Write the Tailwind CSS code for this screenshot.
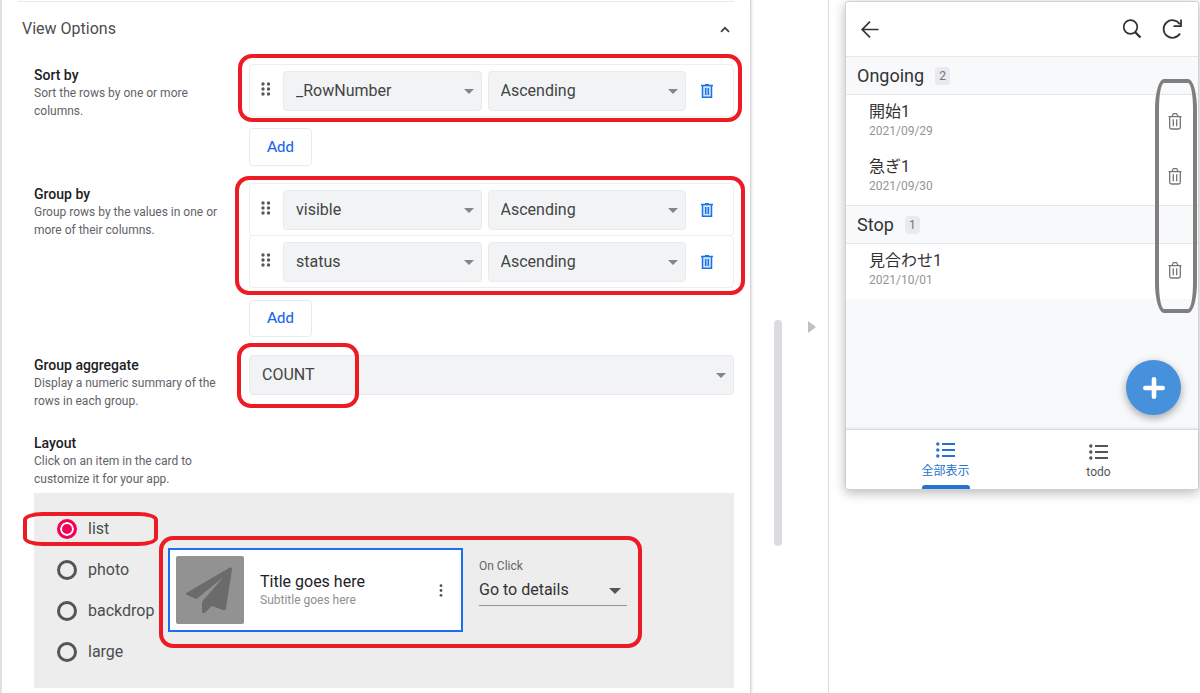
<!DOCTYPE html>
<html lang="en">
<head>
  <meta charset="UTF-8" />
  <meta name="viewport" content="width=device-width, initial-scale=1" />
  <title>View Options</title>
  <script src="https://cdn.jsdelivr.net/npm/@tailwindcss/browser@4"></script>
</head>
<body class="bg-white font-[Roboto,'Noto_Sans_CJK_JP',sans-serif] text-[#3c4043]">

<!-- Shared icons -->
<svg class="hidden">
  <symbol id="drag" viewBox="0 0 10 14">
    <g fill="#55585c"><circle cx="2" cy="2" r="1.7"/><circle cx="7.5" cy="2" r="1.7"/><circle cx="2" cy="7" r="1.7"/><circle cx="7.5" cy="7" r="1.7"/><circle cx="2" cy="12" r="1.7"/><circle cx="7.5" cy="12" r="1.7"/></g>
  </symbol>
  <symbol id="trash" viewBox="0 0 12 14">
    <path d="M1.500 1.500h9v11.700h-9z" fill="#d2e3fc"/>
    <path d="M0 1.5h12M4 .7h4M1.5 1.5v11.7h9V1.5M4.7 4v7M7.3 4v7" fill="none" stroke="currentColor" stroke-width="1.5"/>
  </symbol>
  <symbol id="trash-thin" viewBox="0 0 14 17">
    <path d="M.5 3.7h13M4 3.5l1-2.3q.2-.5.7-.5h2.6q.5 0 .7.5l1 2.3M1.7 3.7v10.6q0 1.7 1.700 1.700h7.200q1.700 0 1.700-1.700V3.700M5.300 6.300v7M8.700 6.300v7" fill="none" stroke="currentColor" stroke-width="1.300"/>
  </symbol>
  <symbol id="caret" viewBox="0 0 10 5">
    <path d="M0 0h10L5 5z" fill="currentColor"/>
  </symbol>
  <symbol id="list" viewBox="0 0 19 16">
    <path d="M6 2h13M6 8h13M6 14h13" stroke="currentColor" stroke-width="1.8"/>
    <g fill="currentColor"><circle cx="1.8" cy="2" r="1.7"/><circle cx="1.8" cy="8" r="1.7"/><circle cx="1.8" cy="14" r="1.7"/></g>
  </symbol>
</svg>

<div class="flex h-screen overflow-hidden">

  <!-- Editor panel -->
  <main class="min-w-0 flex-1 border-l-2 border-r border-l-[#e0e0e0] border-r-[#d5d5d5] pl-4 pr-4 shadow-[1px_0_2px_rgba(0,0,0,0.12)]">
    <header class="mt-px flex h-[63px] items-start justify-between border-t border-[#e8e8e8] pl-1 pt-[15px]">
      <h1 class="text-base leading-6 text-[#4a4d51]">View Options</h1>
      <button type="button" aria-label="Collapse" class="mr-1 flex h-6 items-center text-[#3c4043]">
        <svg class="h-[7px] w-[10px]" viewBox="0 0 10 7"><path d="M1 5.8l4-4 4 4" fill="none" stroke="currentColor" stroke-width="1.7"/></svg>
      </button>
    </header>

    <div class="pl-4">
      <!-- Sort by -->
      <section class="flex">
        <div class="w-[215px] shrink-0 pr-4 pt-[2px]">
          <h2 class="text-sm leading-[18px] font-medium text-[#202124]">Sort by</h2>
          <p class="text-xs leading-[18px] text-[#5f6368]">Sort the rows by one or more columns.</p>
        </div>
        <div class="min-w-0 flex-1">
          <div class="relative">
            <div class="flex h-[53px] items-center rounded border border-[#eceef0] pl-[11px]">
              <svg class="mb-1 mr-3 h-[14px] w-[10px]"><use href="#drag"/></svg>
              <div class="flex min-w-0 flex-1 gap-[6px]">
                <div class="relative flex-1">
                  <select aria-label="Sort column" class="h-10 w-full appearance-none rounded border border-[#e8eaed] bg-[#f1f3f4] pl-3 text-base text-[#444]"><option>_RowNumber</option></select>
                  <svg class="pointer-events-none absolute right-2 top-[18px] h-[5px] w-[10px] text-[#80868b]"><use href="#caret"/></svg>
                </div>
                <div class="relative flex-1">
                  <select aria-label="Sort order" class="h-10 w-full appearance-none rounded border border-[#e8eaed] bg-[#f1f3f4] pl-3 text-base text-[#444]"><option>Ascending</option></select>
                  <svg class="pointer-events-none absolute right-2 top-[18px] h-[5px] w-[10px] text-[#80868b]"><use href="#caret"/></svg>
                </div>
              </div>
              <button type="button" aria-label="Delete" class="ml-[11px] mr-4 flex w-5 justify-center text-[#1a73e8]"><svg class="h-[14px] w-3"><use href="#trash"/></svg></button>
            </div>
            <div class="pointer-events-none absolute -bottom-[5px] -left-[11px] -right-2 -top-[10px] rounded-[14px] border-4 border-[#ed1c24]"></div>
          </div>
          <button type="button" class="mt-[11px] h-[38px] w-[63px] rounded border border-[#e8eaed] pb-[2px] font-[Lato,sans-serif] text-[15px] font-medium text-[#1a67e8]">Add</button>
        </div>
      </section>

      <!-- Group by -->
      <section class="mt-[17px] flex">
        <div class="w-[215px] shrink-0 pr-4 pt-[2px]">
          <h2 class="text-sm leading-[18px] font-medium text-[#202124]">Group by</h2>
          <p class="text-xs leading-[18px] text-[#5f6368]">Group rows by the values in one or more of their columns.</p>
        </div>
        <div class="min-w-0 flex-1">
          <div class="relative">
            <div class="flex h-[53px] items-center rounded border border-[#eceef0] pl-[11px]">
              <svg class="mb-1 mr-3 h-[14px] w-[10px]"><use href="#drag"/></svg>
              <div class="flex min-w-0 flex-1 gap-[6px]">
                <div class="relative flex-1">
                  <select aria-label="First group column" class="h-10 w-full appearance-none rounded border border-[#e8eaed] bg-[#f1f3f4] pl-3 text-base text-[#444]"><option>visible</option></select>
                  <svg class="pointer-events-none absolute right-2 top-[18px] h-[5px] w-[10px] text-[#80868b]"><use href="#caret"/></svg>
                </div>
                <div class="relative flex-1">
                  <select aria-label="First group order" class="h-10 w-full appearance-none rounded border border-[#e8eaed] bg-[#f1f3f4] pl-3 text-base text-[#444]"><option>Ascending</option></select>
                  <svg class="pointer-events-none absolute right-2 top-[18px] h-[5px] w-[10px] text-[#80868b]"><use href="#caret"/></svg>
                </div>
              </div>
              <button type="button" aria-label="Delete" class="ml-[11px] mr-4 flex w-5 justify-center text-[#1a73e8]"><svg class="h-[14px] w-3"><use href="#trash"/></svg></button>
            </div>
            <div class="-mt-px flex h-[53px] items-center rounded border border-[#eceef0] pl-[11px]">
              <svg class="mb-1 mr-3 h-[14px] w-[10px]"><use href="#drag"/></svg>
              <div class="flex min-w-0 flex-1 gap-[6px]">
                <div class="relative flex-1">
                  <select aria-label="Second group column" class="h-10 w-full appearance-none rounded border border-[#e8eaed] bg-[#f1f3f4] pl-3 text-base text-[#444]"><option>status</option></select>
                  <svg class="pointer-events-none absolute right-2 top-[18px] h-[5px] w-[10px] text-[#80868b]"><use href="#caret"/></svg>
                </div>
                <div class="relative flex-1">
                  <select aria-label="Second group order" class="h-10 w-full appearance-none rounded border border-[#e8eaed] bg-[#f1f3f4] pl-3 text-base text-[#444]"><option>Ascending</option></select>
                  <svg class="pointer-events-none absolute right-2 top-[18px] h-[5px] w-[10px] text-[#80868b]"><use href="#caret"/></svg>
                </div>
              </div>
              <button type="button" aria-label="Delete" class="ml-[11px] mr-4 flex w-5 justify-center text-[#1a73e8]"><svg class="h-[14px] w-3"><use href="#trash"/></svg></button>
            </div>
            <div class="pointer-events-none absolute -bottom-[7px] -left-[14px] -right-[11px] -top-[7px] rounded-[14px] border-4 border-[#ed1c24]"></div>
          </div>
          <button type="button" class="mt-3 h-[37px] w-[63px] rounded border border-[#e8eaed] pb-[2px] font-[Lato,sans-serif] text-[15px] font-medium text-[#1a67e8]">Add</button>
        </div>
      </section>

      <!-- Group aggregate -->
      <section class="mt-[18px] flex">
        <div class="w-[215px] shrink-0 pr-4 pt-px">
          <h2 class="text-sm leading-[18px] font-medium text-[#202124]">Group aggregate</h2>
          <p class="text-xs leading-[18px] text-[#5f6368]">Display a numeric summary of the rows in each group.</p>
        </div>
        <div class="relative min-w-0 flex-1">
          <select aria-label="Group aggregate" class="h-10 w-full appearance-none rounded border border-[#e8eaed] bg-[#f1f3f4] pl-3 text-base text-[#444]"><option>COUNT</option></select>
          <svg class="pointer-events-none absolute right-2 top-[18px] h-[5px] w-[10px] text-[#80868b]"><use href="#caret"/></svg>
          <div class="pointer-events-none absolute -left-3 -top-3 h-[65px] w-[122px] rounded-[14px] border-4 border-[#ed1c24]"></div>
        </div>
      </section>

      <!-- Layout -->
      <section class="mt-6">
        <h2 class="text-sm leading-[18px] font-medium text-[#202124]">Layout</h2>
        <p class="w-[200px] text-xs leading-[18px] text-[#5f6368]">Click on an item in the card to customize it for your app.</p>

        <div class="relative mt-[5px] flex h-[195px] items-start bg-[#ededed]">
          <div class="w-[134px] shrink-0 pl-[23px] pt-[15px] text-base text-[#4a4d51]">
            <label class="flex h-[41px] items-center gap-[11px]"><input type="radio" name="layout" checked class="size-5 shrink-0 appearance-none rounded-full border-[3px] border-[#f50057] bg-[#f50057] shadow-[inset_0_0_0_2px_#fff]">list</label>
            <label class="flex h-[41px] items-center gap-[11px]"><input type="radio" name="layout" class="size-5 shrink-0 appearance-none rounded-full border-[3px] border-[#555]">photo</label>
            <label class="flex h-[41px] items-center gap-[11px]"><input type="radio" name="layout" class="size-5 shrink-0 appearance-none rounded-full border-[3px] border-[#555]">backdrop</label>
            <label class="flex h-[41px] items-center gap-[11px]"><input type="radio" name="layout" class="size-5 shrink-0 appearance-none rounded-full border-[3px] border-[#555]">large</label>
          </div>

          <div class="relative mt-[55px] flex pr-[15px]">
            <div class="flex h-[84px] w-[295px] items-center border-2 border-[#1a6ff0] bg-white pl-[6px] pr-4">
              <div class="size-[68px] rounded-[2px] bg-[#929292]">
                <svg class="size-[68px]" viewBox="0 0 68 68"><path d="M53.5 11.7Q56 10.5 56 13.3L50 52.5q-.5 2.3-3 1.6L36 50l-7.5 7q-2.5 1-2.5-1.5V48q0-2 1-3.5L47.5 21 20.5 43 11 39q-2-1-.3-2.3z" fill="#6b6b6b"/></svg>
              </div>
              <div class="ml-4 flex-1">
                <div class="text-base leading-5 text-[#202124]">Title goes here</div>
                <div class="text-xs leading-4 text-[#8f8f8f]">Subtitle goes here</div>
              </div>
              <button type="button" aria-label="More" class="flex w-2 justify-center text-[#555]">
                <svg class="h-[13px] w-1" viewBox="0 0 4 13" fill="currentColor"><circle cx="2" cy="1.7" r="1.4"/><circle cx="2" cy="6.5" r="1.4"/><circle cx="2" cy="11.3" r="1.4"/></svg>
              </button>
            </div>
            <div class="relative ml-4 w-[148px] pt-[10px]">
              <label for="on-click" class="block text-xs leading-4 text-[#666]">On Click</label>
              <select id="on-click" class="h-8 w-full appearance-none border-b border-[#949494] text-base text-[#333]"><option>Go to details</option></select>
              <svg class="pointer-events-none absolute right-[6px] top-10 h-[6px] w-3 text-[#555]" viewBox="0 0 12 6"><path d="M0 0h12L6 6z" fill="currentColor"/></svg>
            </div>
            <div class="pointer-events-none absolute -bottom-4 -left-[9px] -top-3 right-0 rounded-[14px] border-4 border-[#ed1c24]"></div>
          </div>

          <div class="pointer-events-none absolute -left-[11px] top-[19px] h-[34px] w-[135px] rounded-[20px/8px] border-4 border-[#ed1c24]"></div>
        </div>
      </section>
    </div>
  </main>

  <!-- Scrollbar and preview toggle -->
  <div class="flex w-[77px] shrink-0 items-start pl-[23px] pt-[320px]">
    <div class="h-[226px] w-2 rounded-full bg-[#dadce0]"></div>
    <button type="button" aria-label="Hide preview" class="ml-[26px] mt-px text-[#bdc1c6]"><svg class="h-3 w-2" viewBox="0 0 8 12"><path d="M0 0l8 6-8 6z" fill="currentColor"/></svg></button>
  </div>

  <!-- App preview -->
  <aside class="w-[372px] shrink-0 border-l border-[#dadce0] pl-4 pr-px pt-px">
    <div class="relative flex h-[489px] flex-col rounded-[3px] border border-[#d0d2d4] bg-[#f8f9fb] shadow-[0_3px_12px_rgba(0,0,0,0.28)]">
      <header class="flex h-[55px] shrink-0 items-center rounded-t-[3px] border-b border-[#e4e6e8] bg-white pl-[15px] pr-4 text-[#333]">
        <button type="button" aria-label="Back"><svg class="h-[17px] w-[18px]" viewBox="0 0 18 17"><path d="M17.5 8.5H1.5M9 .7L1.2 8.5 9 16.3" fill="none" stroke="currentColor" stroke-width="1.7"/></svg></button>
        <button type="button" aria-label="Search" class="ml-auto"><svg class="size-5" viewBox="0 0 20 20"><circle cx="8.5" cy="8" r="6.8" fill="none" stroke="currentColor" stroke-width="1.7"/><path d="M13 13l5.500 5.500" stroke="currentColor" stroke-width="2.4"/></svg></button>
        <button type="button" aria-label="Refresh" class="ml-5"><svg class="size-5" viewBox="0 0 20 20"><path d="M18 14.5A8.800 8.800 0 1 1 17.800 5.200M19 .5v6.700h-7.500" fill="none" stroke="currentColor" stroke-width="1.8"/></svg></button>
      </header>

      <div class="flex h-[38px] shrink-0 items-center gap-[11px] border-b border-[#e4e6e8] pl-[11px] text-lg text-[#333]">Ongoing <span class="flex h-[18px] w-[15px] items-center justify-center rounded bg-[#e8eaed] text-xs text-[#757575]">2</span></div>
      <div class="flex h-[55px] shrink-0 items-center bg-white pb-[3px] pl-[23px] pr-4">
        <div class="flex-1"><div class="text-base leading-5 text-[#333]">開始1</div><div class="text-xs leading-[18px] text-[#959595]">2021/09/29</div></div>
        <button type="button" aria-label="Delete" class="text-[#757575]"><svg class="h-[17px] w-[14px]"><use href="#trash-thin"/></svg></button>
      </div>
      <div class="flex h-[55px] shrink-0 items-center bg-white pb-[3px] pl-[23px] pr-4">
        <div class="flex-1"><div class="text-base leading-5 text-[#333]">急ぎ1</div><div class="text-xs leading-[18px] text-[#959595]">2021/09/30</div></div>
        <button type="button" aria-label="Delete" class="text-[#757575]"><svg class="h-[17px] w-[14px]"><use href="#trash-thin"/></svg></button>
      </div>
      <div class="flex h-[39px] shrink-0 items-center gap-[11px] border-y border-[#e4e6e8] pl-[11px] text-lg text-[#333]">Stop <span class="flex h-[18px] w-[15px] items-center justify-center rounded bg-[#e8eaed] text-xs text-[#757575]">1</span></div>
      <div class="flex h-[55px] shrink-0 items-center bg-white pb-[3px] pl-[23px] pr-4">
        <div class="flex-1"><div class="text-base leading-5 text-[#333]">見合わせ1</div><div class="text-xs leading-[18px] text-[#959595]">2021/10/01</div></div>
        <button type="button" aria-label="Delete" class="text-[#757575]"><svg class="h-[17px] w-[14px]"><use href="#trash-thin"/></svg></button>
      </div>

      <nav class="mt-auto flex h-[60px] shrink-0 justify-center rounded-b-[3px] border-t border-[#d8dade] bg-white text-xs shadow-[0_-1px_3px_rgba(0,0,0,0.08)]">
        <a href="#all" class="flex w-[153px] flex-col items-center pt-3 text-[#2474cc]">
          <svg class="h-4 w-[19px]"><use href="#list"/></svg>
          <span class="mt-1 leading-[18px]">全部表示</span>
          <span class="mt-auto h-1 w-12 rounded-t-[3px] bg-[#2474cc]"></span>
        </a>
        <a href="#todo" class="flex w-[153px] flex-col items-center pt-[14px] text-[#555]">
          <svg class="h-4 w-[19px]"><use href="#list"/></svg>
          <span class="mt-[3px] leading-[18px]">todo</span>
        </a>
      </nav>

      <button type="button" aria-label="Add item" class="absolute bottom-[74px] right-[17px] flex size-[55px] items-center justify-center rounded-full bg-[#4790dc] shadow-[0_3px_8px_rgba(0,0,0,0.35)]">
        <svg class="size-[22px]" viewBox="0 0 22 22"><path d="M11 2.300v17.400M2.300 11h17.400" stroke="#fff" stroke-width="4.600" stroke-linecap="round"/></svg>
      </button>
      <div class="pointer-events-none absolute right-px top-[77px] h-[234px] w-[42px] rounded-[9px/30px] border-4 border-[#7f7f7f]"></div>
    </div>
  </aside>
</div>

</body>
</html>
